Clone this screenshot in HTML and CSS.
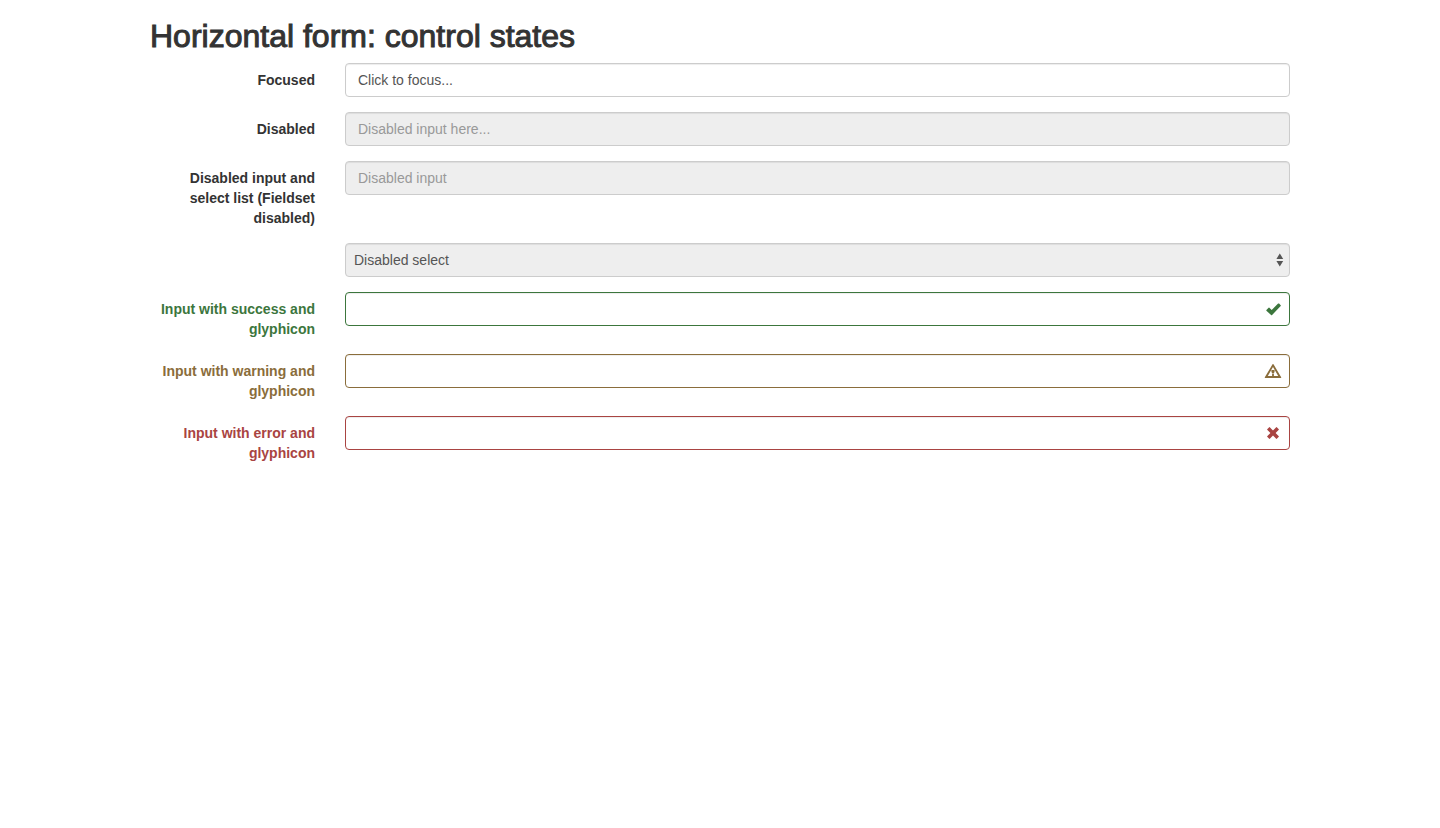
FILE: index.html
```html
<!DOCTYPE html>
<html lang="en">
<head>
  <meta charset="utf-8">
  <title>Horizontal form: control states</title>
  <meta name="viewport" content="width=device-width, initial-scale=1">
  <link rel="stylesheet" href="styles.css">
</head>
<body>
  <main class="container">
    <h2 class="title">Horizontal form: control states</h2>
    <form class="form">
      <div class="form-group">
        <label class="label" for="focused">Focused</label>
        <div class="field"><input class="control" id="focused" type="text" value="Click to focus..."></div>
      </div>
      <div class="form-group">
        <label class="label" for="disabled">Disabled</label>
        <div class="field"><input class="control" id="disabled" type="text" placeholder="Disabled input here..." disabled></div>
      </div>
      <fieldset class="fieldset" disabled>
        <div class="form-group">
          <label class="label" for="disabled-input">Disabled input and select list (Fieldset disabled)</label>
          <div class="field"><input class="control" id="disabled-input" type="text" placeholder="Disabled input"></div>
        </div>
        <div class="form-group">
          <label class="label" for="disabled-select" aria-label="Disabled select"></label>
          <div class="field">
            <select class="control select" id="disabled-select"><option>Disabled select</option></select>
            <svg class="feedback" viewBox="0 0 34 34" aria-hidden="true"><path d="M20.4 15.9 23.8 10.4 27.2 15.9zM20.4 18.1H27.2L23.8 23.4z"/></svg>
          </div>
        </div>
      </fieldset>
      <div class="form-group success">
        <label class="label" for="success">Input with success and glyphicon</label>
        <div class="field">
          <input class="control" id="success" type="text">
          <svg class="feedback" viewBox="0 0 34 34" aria-hidden="true"><path d="M10.4 18 12.6 15.7Q13 15.4 13.4 15.7L15.7 18 22.1 11.6Q22.6 11.2 23.1 11.6L24.7 13.3Q25 13.7 24.7 14.1L16.1 23Q15.6 23.5 15.1 23L10.4 18.7Q10.1 18.3 10.4 18z"/></svg>
        </div>
      </div>
      <div class="form-group warning">
        <label class="label" for="warning">Input with warning and glyphicon</label>
        <div class="field">
          <input class="control" id="warning" type="text">
          <svg class="feedback" viewBox="0 0 34 34" aria-hidden="true"><path fill-rule="evenodd" d="M16.5 10.3Q17 9.8 17.5 10.3L25.2 23.2Q25.4 24 24.6 24H9.4Q8.6 24 8.8 23.2zM17 12.9 11.8 21.9H22.2z"/><path d="M15.4 15.9H18.6V17.4L17.9 19.6H16.1L15.4 17.4zM16.1 20H17.9V22H16.1z"/></svg>
        </div>
      </div>
      <div class="form-group error">
        <label class="label" for="error">Input with error and glyphicon</label>
        <div class="field">
          <input class="control" id="error" type="text">
          <svg class="feedback" viewBox="0 0 34 34" aria-hidden="true"><path d="M11.2 13.2 13.2 11.2Q13.5 11 13.8 11.2L17 14.4 20.2 11.2Q20.5 11 20.8 11.2L22.8 13.2Q23 13.5 22.8 13.8L19.6 17 22.8 20.2Q23 20.5 22.8 20.8L20.8 22.8Q20.5 23 20.2 22.8L17 19.6 13.8 22.8Q13.5 23 13.2 22.8L11.2 20.8Q11 20.5 11.2 20.2L14.4 17 11.2 13.8Q11 13.5 11.2 13.2z"/></svg>
        </div>
      </div>
    </form>
  </main>
</body>
</html>
```
FILE: styles.css
```css
* {
  box-sizing: border-box;
}

body {
  margin: 0;
  background: #fff;
  color: #333;
  font: 14px/20px "Helvetica Neue", Helvetica, "Liberation Sans", Arial, sans-serif;
}

.container {
  max-width: 1170px;
  margin: 0 auto;
  padding: 20px 15px;
}

.title {
  margin: 0 0 10px;
  font-size: 32px;
  font-weight: 500;
  line-height: 33px;
  -webkit-text-stroke: 1px #333;
}

.form,
.fieldset {
  display: flex;
  flex-direction: column;
  gap: 15px;
}

.fieldset {
  min-width: 0;
  margin: 0;
  padding: 0;
  border: 0;
}

.form-group {
  display: grid;
  grid-template-columns: 165px minmax(0, 1fr);
  column-gap: 30px;
  align-items: start;
}

.label {
  padding-top: 7px;
  font-weight: 700;
  text-align: right;
}

.field {
  position: relative;
}

.control {
  display: block;
  width: 100%;
  height: 34px;
  margin: 0;
  padding: 6px 12px;
  border: 1px solid #ccc;
  border-radius: 4px;
  background: #fff;
  box-shadow: inset 0 1px 1px rgba(0, 0, 0, 0.075);
  color: #555;
  font: inherit;
}

.control::placeholder {
  color: #999;
  opacity: 1;
}

.control:disabled {
  background: #eee;
  opacity: 1;
}

.select {
  appearance: none;
  padding: 6px 30px 6px 8px;
}

.feedback {
  position: absolute;
  top: 0;
  right: 0;
  width: 34px;
  height: 34px;
  fill: #555;
  pointer-events: none;
}

.success .label {
  color: #3c763d;
}

.success .control {
  border-color: #3c763d;
}

.success .feedback {
  fill: #3c763d;
}

.warning .label {
  color: #8a6d3b;
}

.warning .control {
  border-color: #8a6d3b;
}

.warning .feedback {
  fill: #8a6d3b;
}

.error .label {
  color: #a94442;
}

.error .control {
  border-color: #a94442;
}

.error .feedback {
  fill: #a94442;
}

@media (max-width: 767px) {
  .form-group {
    grid-template-columns: minmax(0, 1fr);
    row-gap: 5px;
  }

  .label {
    padding-top: 0;
    text-align: left;
  }
}
```
